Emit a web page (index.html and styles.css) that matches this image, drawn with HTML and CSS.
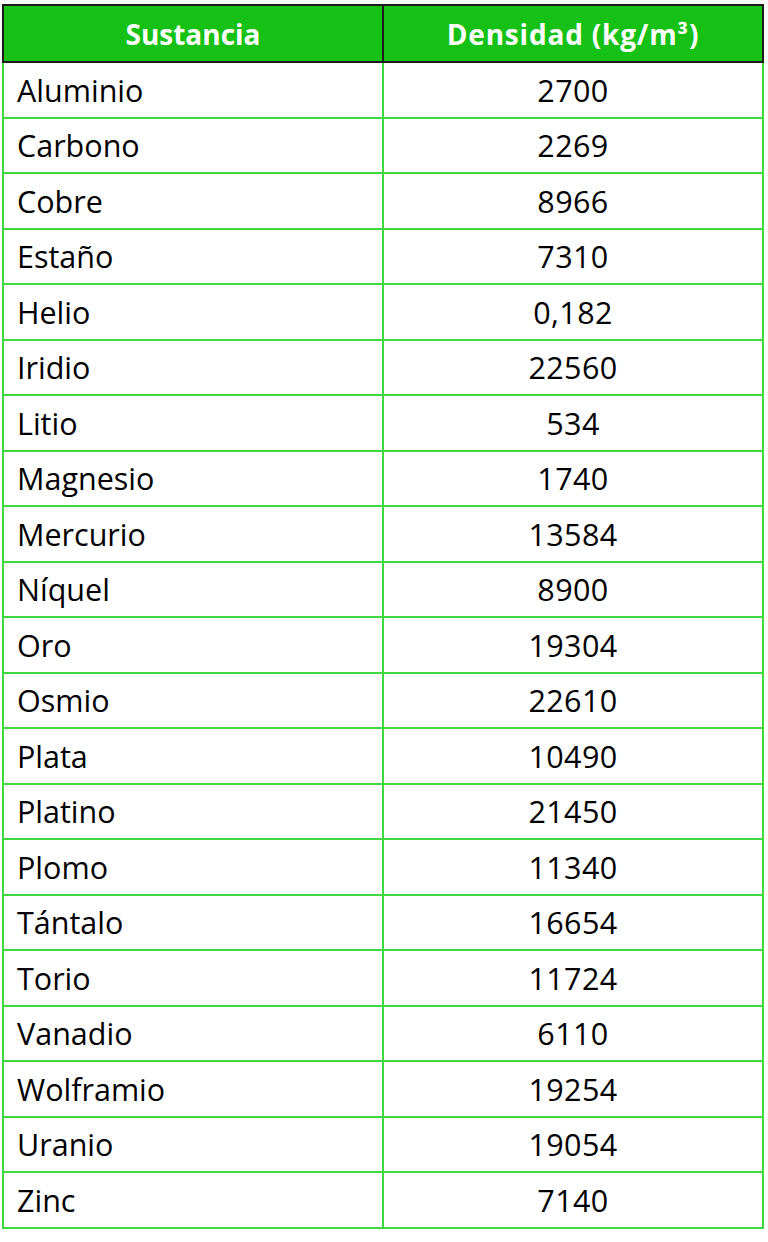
FILE: index.html
```html
<!DOCTYPE html>
<html lang="es">
<head>
<meta charset="utf-8">
<link rel="stylesheet" href="styles.css">
</head>
<body>
<table class="tabla">
<thead>
<tr><th class="col-nombre">Sustancia</th><th class="col-densidad">Densidad (kg/m³)</th></tr>
</thead>
<tbody>
<tr><td>Aluminio</td><td>2700</td></tr>
<tr><td>Carbono</td><td>2269</td></tr>
<tr><td>Cobre</td><td>8966</td></tr>
<tr><td>Estaño</td><td>7310</td></tr>
<tr><td>Helio</td><td>0,182</td></tr>
<tr><td>Iridio</td><td>22560</td></tr>
<tr><td>Litio</td><td>534</td></tr>
<tr><td>Magnesio</td><td>1740</td></tr>
<tr><td>Mercurio</td><td>13584</td></tr>
<tr><td>Níquel</td><td>8900</td></tr>
<tr><td>Oro</td><td>19304</td></tr>
<tr><td>Osmio</td><td>22610</td></tr>
<tr><td>Plata</td><td>10490</td></tr>
<tr><td>Platino</td><td>21450</td></tr>
<tr><td>Plomo</td><td>11340</td></tr>
<tr><td>Tántalo</td><td>16654</td></tr>
<tr><td>Torio</td><td>11724</td></tr>
<tr><td>Vanadio</td><td>6110</td></tr>
<tr><td>Wolframio</td><td>19254</td></tr>
<tr><td>Uranio</td><td>19054</td></tr>
<tr><td>Zinc</td><td>7140</td></tr>
</tbody>
</table>
</body>
</html>
```
FILE: styles.css
```css
html, body {
  margin: 0;
  padding: 0;
  background: #ffffff;
}
body {
  padding: 4px 0 0 2px;
  font-family: "Open Sans", "Liberation Sans", sans-serif;
}
.tabla {
  border-collapse: collapse;
  width: 762px;
  table-layout: fixed;
}
.tabla th {
  background: #16c116;
  color: #ffffff;
  font-weight: 700;
  font-size: 28px;
  height: 55px;
  padding: 0;
  border: 2px solid #1a1a1a;
  text-align: center;
}
.tabla th.col-densidad {
  letter-spacing: 0.8px;
}
.tabla td {
  height: 53.5px;
  padding: 0;
  color: #000000;
  border: 2px solid #3fd83f;
  font-size: 30.5px;
}
.tabla td:first-child {
  padding-left: 13px;
  text-align: left;
}
.tabla td:last-child {
  text-align: center;
  letter-spacing: 0.4px;
}
```
